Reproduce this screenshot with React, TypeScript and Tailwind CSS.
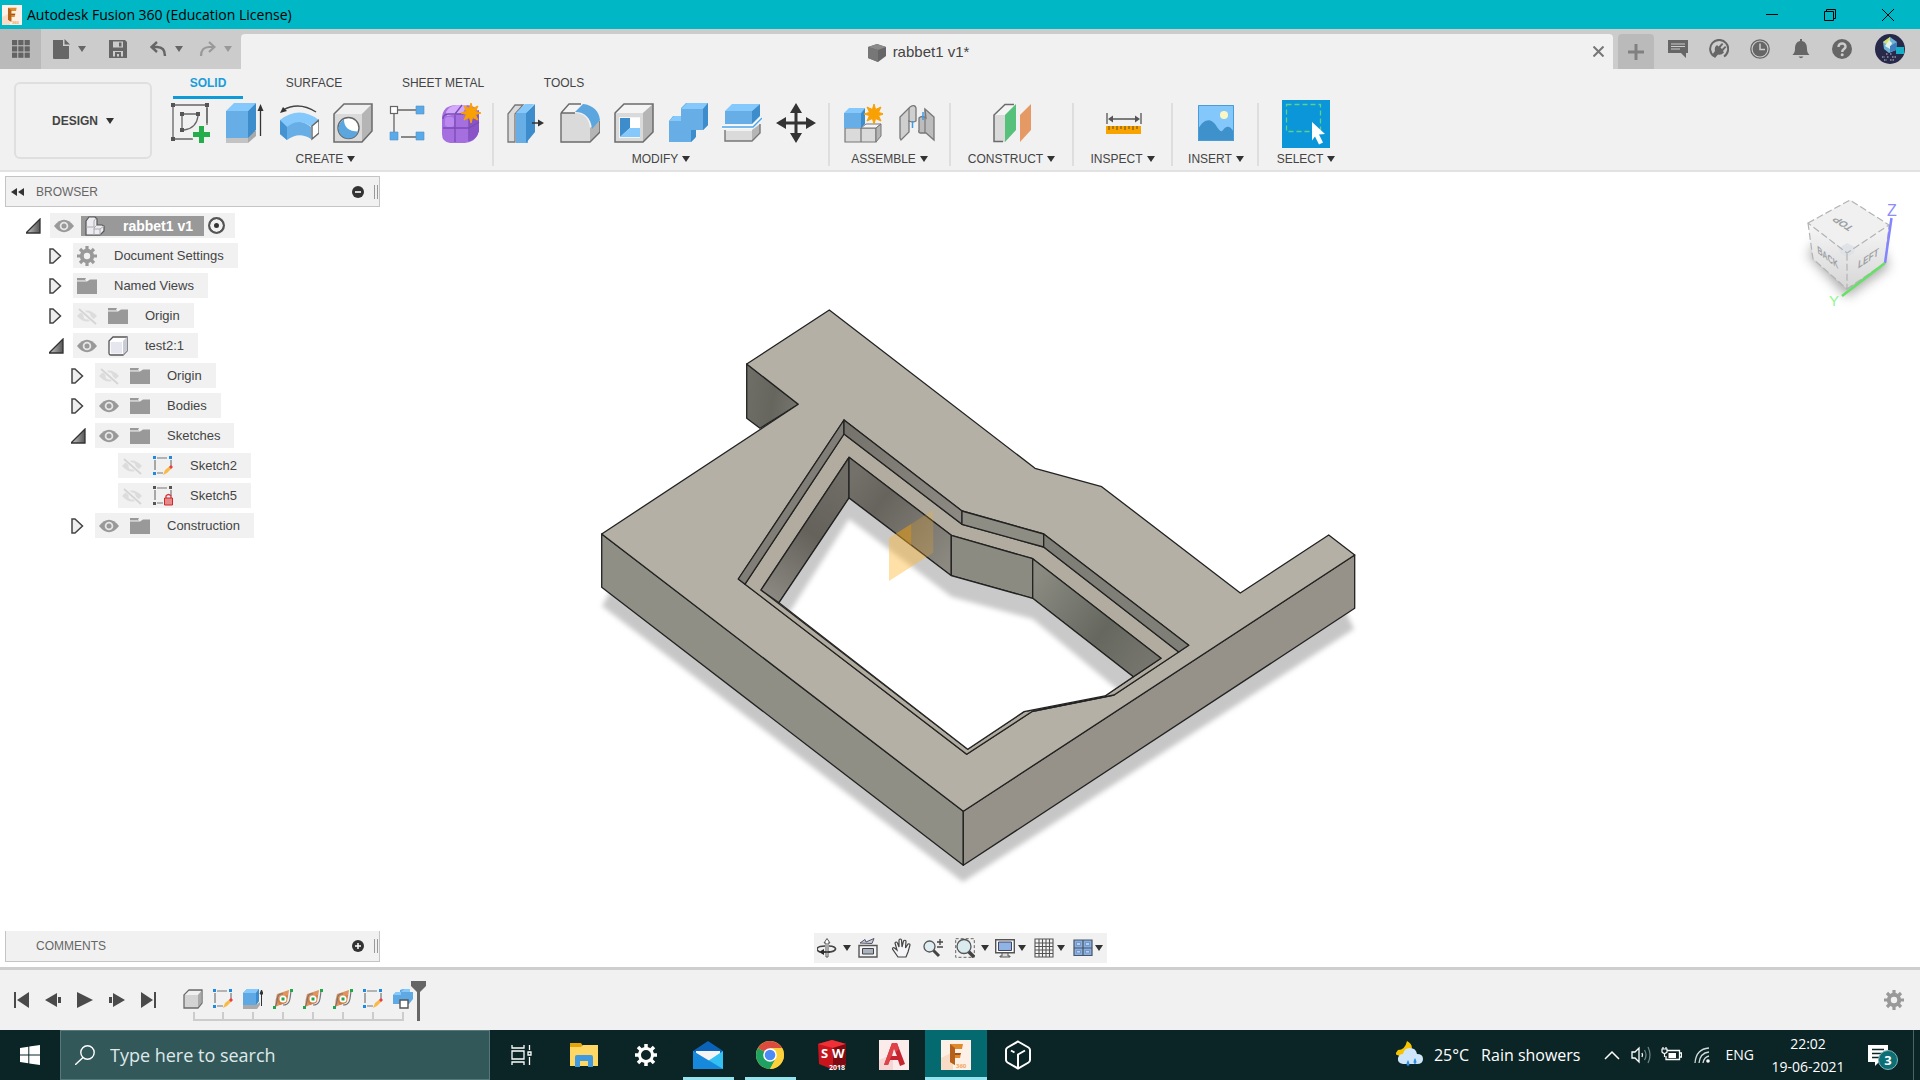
import React, { FunctionComponent, ReactNode } from 'react';
import clsx from 'clsx';

interface IconProps {
  box?: string;
  className?: string;
  children: ReactNode;
}

const Icon: FunctionComponent<IconProps> = ({
  box = '0 0 40 40',
  className = 'w-10 h-10',
  children,
}) => (
  <svg viewBox={box} className={clsx('shrink-0', className)} aria-hidden="true">
    {children}
  </svg>
);

const Caret = ({ className = 'text-[#333]' }: { className?: string }) => (
  <svg
    viewBox="0 0 8 6"
    className={clsx('w-2 h-1.5 shrink-0', className)}
    aria-hidden="true"
  >
    <path d="M0 0h8L4 6z" fill="currentColor" />
  </svg>
);

/* ---------- title bar ---------- */

const FusionLogo = ({ className }: { className: string }) => (
  <Icon box="0 0 30 30" className={className}>
    <rect width="30" height="30" fill="#fdf0e6" />
    <path d="M0 18L12 12v18H0z" fill="#f9dcc5" />
    <path d="M9 4h13l-1 5h-7v4h6l-1 5h-5v7l-5-3z" fill="#e08a2e" />
    <path d="M9 4l5 4v17l-5-3z" fill="#b5601b" />
    <path d="M14 13h6l-1 2h-5z" fill="#9c5218" />
    <text x="15" y="28" fontSize="6" fontWeight="700" fill="#f0a860">
      360
    </text>
  </Icon>
);

const TitleBar = () => (
  <header className="flex items-center h-[29px] bg-[#00b7c6] pl-0.5 font-['Open_Sans',sans-serif]">
    <FusionLogo className="w-5 h-5" />
    <h1 className="ml-[5px] text-sm text-black">
      Autodesk Fusion 360 (Education License)
    </h1>
    <div className="ml-auto flex h-full pr-[3px]">
      <button aria-label="Minimize" className="w-[58px] flex items-center justify-center">
        <Icon box="0 0 12 12" className="w-3 h-3">
          <path d="M0 5.500h12" stroke="#000" />
        </Icon>
      </button>
      <button aria-label="Restore" className="w-[58px] flex items-center justify-center">
        <Icon box="0 0 12 12" className="w-3 h-3">
          <path d="M.5 2.500h9v9h-9zM2.500 2.500v-2h9v9h-2" stroke="#000" fill="none" />
        </Icon>
      </button>
      <button aria-label="Close" className="w-[58px] flex items-center justify-center">
        <Icon box="0 0 12 12" className="w-3 h-3">
          <path d="M0 0l12 12M12 0L0 12" stroke="#000" />
        </Icon>
      </button>
    </div>
  </header>
);

/* ---------- document tabs ---------- */

const small = 'w-5 h-5';

const TabBar = () => (
  <div className="flex items-end h-10 bg-[#ccc] text-[#666]">
    <button aria-label="Data panel" className="w-[41px] h-10 bg-[#bababa] flex items-center justify-center">
      <Icon box="0 0 18 18" className="w-[18px] h-[18px]">
        {[0, 6.3, 12.6].map((x) =>
          [0, 6.3, 12.6].map((y) => (
            <rect key={`${x}-${y}`} x={x} y={y} width="5.2" height="5.2" fill="#636363" />
          ))
        )}
      </Icon>
    </button>
    <div className="flex items-center h-10 w-[200px] pl-[11px]">
      <button aria-label="File" className="flex items-center gap-2">
        <Icon box="0 0 18 20" className="w-[18px] h-5">
          <path d="M1 1h10v6h6v12q0 1-1 1H2q-1 0-1-1z" fill="#666" />
          <path d="M12.500 0v5.500H18z" fill="#666" />
        </Icon>
        <Caret className="text-[#666]" />
      </button>
      <button aria-label="Save" className="ml-[23px]">
        <Icon box="0 0 18 18" className="w-[18px] h-[18px]">
          <path d="M0 0h16l2 2v16H0z" fill="#666" />
          <path d="M4 1.500h10v6H4zM4 11h10v5.500H4z" fill="#ccc" />
          <path d="M10 2.500h2.500v4H10zM6 12h6v5h-2v-3H8v3H6z" fill="#666" />
        </Icon>
      </button>
      <button aria-label="Undo" className="ml-[23px] flex items-center gap-2">
        <Icon box="0 0 17 16" className="w-[17px] h-4">
          <path d="M7 1L1.500 6 7 11M2 6h5c5 0 8 3 8 9" fill="none" stroke="#666" strokeWidth="2.400" />
        </Icon>
        <Caret className="text-[#666]" />
      </button>
      <button aria-label="Redo" className="ml-4 flex items-center gap-2">
        <Icon box="0 0 17 16" className="w-[17px] h-4">
          <path d="M10 1l5.500 5L10 11M15 6h-5c-5 0-8 3-8 9" fill="none" stroke="#999" strokeWidth="2.200" />
        </Icon>
        <Caret className="text-[#999]" />
      </button>
    </div>
    <div className="flex flex-1 items-center h-[35px] bg-[#f1f1f1] rounded-t">
      <div className="flex flex-1 items-center justify-center gap-1.5 pl-0.5 pt-0.5">
        <Icon box="0 0 20 20" className={small}>
          <path d="M1 4l9-3 9 3v9l-8 6-10-4z" fill="#666" />
          <path d="M1 4l10 3 8-3-9-3z" fill="#8b8b8b" />
          <path d="M1 4l10 3v12L1 15z" fill="#777" />
        </Icon>
        <span className="text-[15px] text-[#444]">rabbet1 v1*</span>
      </div>
      <button aria-label="Close tab" className="w-5 flex">
        <Icon box="0 0 11 11" className="w-[11px] h-[11px]">
          <path d="M.5.5l10 10M10.500.5l-10 10" stroke="#777" strokeWidth="2" />
        </Icon>
      </button>
    </div>
    <button aria-label="New design" className="ml-[5px] w-9 h-[35px] rounded-t bg-[#bababa] flex items-center justify-center">
      <Icon box="0 0 16 16" className="w-4 h-4">
        <path d="M8 0v16M0 8h16" stroke="#808080" strokeWidth="3" />
      </Icon>
    </button>
    <div className="flex items-center h-10 gap-[21px] pl-3.5 pr-[15px]">
      <button aria-label="Comments">
        <Icon box="0 0 20 20" className={small}>
          <path d="M0 1h20v13h-2v5l-5-5H0z" fill="#666" />
          <path d="M3 5h14M3 7.500h14M3 10h9" stroke="#ccc" strokeWidth="1.200" />
        </Icon>
      </button>
      <button aria-label="Extensions">
        <Icon box="0 0 20 20" className={small}>
          <path d="M5 17.300A9 9 0 1 1 15 17.500" fill="none" stroke="#666" strokeWidth="2" />
          <path d="M3 16l3-4q-1-4 2-6l1.500 1.500L13 4l1.300 1.300L11.500 8.500l1.500 1.500L16 7l1.300 1.300L14 12l1 1.500q-3 3-6 2L6 19z" fill="#666" />
        </Icon>
      </button>
      <button aria-label="Job status">
        <Icon box="0 0 20 20" className={small}>
          <circle cx="10" cy="10" r="9.200" fill="none" stroke="#666" strokeWidth="1.300" />
          <circle cx="10" cy="10" r="7.400" fill="#666" />
          <path d="M10 4.500v6h5" fill="none" stroke="#ccc" strokeWidth="1.500" />
        </Icon>
      </button>
      <button aria-label="Notifications">
        <Icon box="0 0 20 20" className={small}>
          <path d="M9 0h2v2c4 1 5 4 5 8 0 3 1 4 2.500 6h-17C3 14 4 13 4 10c0-4 1-7 5-8zM7.500 17.500h5Q10 21 7.500 17.500z" fill="#666" />
        </Icon>
      </button>
      <button aria-label="Help">
        <Icon box="0 0 20 20" className={small}>
          <circle cx="10" cy="10" r="10" fill="#666" />
          <path d="M6.500 8c0-5 7.500-4.500 7 0-.3 2.300-3.300 2-3.300 5" fill="none" stroke="#ccc" strokeWidth="2.400" />
          <circle cx="10.200" cy="15.800" r="1.500" fill="#ccc" />
        </Icon>
      </button>
      <button aria-label="Account" className="ml-0.5">
        <Icon box="0 0 30 30" className="w-[30px] h-[30px]">
          <circle cx="15" cy="15" r="15" fill="#28284a" />
          <path d="M8 8l7-5 7 5-1 8-7 3-5-4z" fill="#6db3d6" />
          <path d="M8 8l7-5v9z" fill="#d5e06a" />
          <path d="M14 6l3 3-2 6-5-3z" fill="#e3f0e8" />
          <path d="M15 12l7-4-1 8-6 2z" fill="#3f7fc0" />
          <rect x="21" y="13" width="8" height="7" fill="#15b0c8" />
          <path d="M7 23h3m2 0h2m3 0h4M9 26h3m3 0h5M11 20h2m2 0h2" stroke="#c9cbd8" strokeDasharray="1.500 1" />
        </Icon>
      </button>
    </div>
  </div>
);

/* ---------- ribbon ---------- */

const Star = ({ x, y }: { x: number; y: number }) => (
  <path
    transform={`translate(${x} ${y})`}
    d="M0-10l1.600 5.500L7-7 4.500-1.600 10 0 4.500 1.600 7 7 1.600 4.500 0 10-1.600 4.500-7 7-4.500 1.600-10 0-4.500-1.600-7-7-1.600-4.500z"
    fill="#f8a004"
    stroke="#f8a004"
  />
);

const createIcons: [string, ReactNode][] = [
  [
    'Create Sketch',
    <>
      <path d="M2 2h34v34H2zM11 11h16M11 11v16" fill="none" stroke="#666" strokeWidth="1.300" />
      <path d="M0 0h4v4H0zM34 0h4v4h-4zM0 34h4v4H0zM9 9h4v4H9zM25 9h4v4h-4zM9 25h4v4H9z" fill="#555" />
      <path d="M19 20h21v20H22v-3z" fill="#f1f1f1" />
      <path d="M36 5v17M27 13c-1 8-6 13-14 14" fill="none" stroke="#666" strokeWidth="1.300" />
      <path d="M28 23h5v6h6v5h-6v6h-5v-6h-6v-5h6z" fill="#23ad4b" />
    </>,
  ],
  [
    'Extrude',
    <>
      <path d="M1 35l8-7h22v5l-8 7H1z" fill="#a9a9a9" />
      <path d="M1 35h22v5H1z" fill="#c3c3c3" />
      <path d="M1 8l8-8h22l-8 8z" fill="#85c8fb" />
      <path d="M1 8h22v27H1z" fill="#66aee5" />
      <path d="M23 8l8-8v27l-8 8z" fill="#3d8dcc" />
      <path d="M35.500 33V5" stroke="#333" strokeWidth="1.300" />
      <path d="M32.500 8l3-7 3 7z" fill="#333" />
    </>,
  ],
  [
    'Revolve',
    <>
      <path d="M1 17Q20 2 40 17l-7 7Q20 14 8 25z" fill="#85c8fb" />
      <path d="M1 17v14l7 6V24zM8 24q12-10 24 0v12q-12-8-24 1z" fill="#66aee5" />
      <path d="M1 17v14l7 6V24z" fill="#4593d0" />
      <path d="M33 23l7-6v13l-7 6z" fill="#fff" stroke="#666" strokeWidth="1.400" />
      <path d="M4 7Q20-2 37 9" fill="none" stroke="#444" strokeWidth="1.400" />
      <path d="M1 10l3-6 4 4z" fill="#333" />
    </>,
  ],
  [
    'Hole',
    <>
      <path d="M1 11L11 1h28v27L29 39H1z" fill="#dadada" />
      <path d="M1 11L11 1h28L29 11z" fill="#f0f0f0" />
      <path d="M29 11L39 1v27L29 39z" fill="#b5b5b5" />
      <path d="M1 11L11 1h28v27L29 39H1z" fill="none" stroke="#6b6b6b" strokeWidth="1.500" />
      <circle cx="15.500" cy="25" r="10.500" fill="#fff" stroke="#666" strokeWidth="1.400" />
      <path d="M11 16.500c0 8 5 12 14 12a10 10 0 1 1-14-12z" fill="#5ba6df" />
    </>,
  ],
  [
    'Rectangular Pattern',
    <>
      <path d="M8 7h20M12 34h16M5 11v18" stroke="#666" strokeWidth="1.300" transform="translate(2)" />
      <rect x="3.500" y="3.500" width="7" height="7" fill="#fff" stroke="#666" strokeWidth="1.200" />
      <path d="M29 3h8v8h-8zM29 29h8v8h-8zM3 29h8v8H3z" fill="#5ba9e6" stroke="#4a93cc" strokeWidth=".6" />
    </>,
  ],
  [
    'Create Form',
    <>
      <path d="M1 14Q2 3 14 2h12q12 1 12 12v14q-3 11-14 12H9q-8-1-8-9z" fill="#a66fe0" />
      <path d="M5 9Q8 3 15 2h11l-4 8-16 3z" fill="#d3a9fb" />
      <path d="M28 12l10-5v21q-2 8-9 10z" fill="#8a54c9" />
      <path d="M2 16q0-5 6-5h15q5 0 5 5v22M14 12v27M2 25h26l10-6M14 11l7-9" fill="none" stroke="#7a4bb4" strokeWidth="1.300" />
      <rect x="4" y="14" width="9" height="10" rx="3" fill="#bb88f0" />
      <Star x={30} y={10} />
    </>,
  ],
];

const modifyIcons: [string, ReactNode][] = [
  [
    'Press Pull',
    <>
      <path d="M2 11L9 2h8l-8 9v28H2z" fill="#dadada" stroke="#777" strokeWidth="1.300" />
      <path d="M10 10l9-9h9l-8 9z" fill="#85c8fb" />
      <path d="M10 10h12v30H10z" fill="#66aee5" />
      <path d="M20 10l9-9v28l-9 11z" fill="#3d8dcc" />
      <path d="M26 20h8" stroke="#333" strokeWidth="1.500" />
      <path d="M32 16.500l6 3.500-6 3.500z" fill="#333" />
    </>,
  ],
  [
    'Fillet',
    <>
      <path d="M1 10l8-9h9l-3 9c8 0 14 5 15 15v14H1z" fill="#dadada" />
      <path d="M1 10l8-9h12l-4 9z" fill="#f4f4f4" />
      <path d="M30 25l10-8v12L30 39z" fill="#b5b5b5" />
      <path d="M1 10l8-9h12M1 10v29h29l10-10V18M1 10h14" fill="none" stroke="#6b6b6b" strokeWidth="1.400" />
      <path d="M15 9l8-8c10 1 16 7 17 16l-8 9C31 15 25 9 15 9z" fill="#5ba6df" />
    </>,
  ],
  [
    'Shell',
    <>
      <path d="M1 10L10 1h29v28L29 39H1z" fill="#dadada" />
      <path d="M1 10L10 1h29l-10 9z" fill="#f4f4f4" />
      <path d="M29 10L39 1v28L29 39z" fill="#b5b5b5" />
      <path d="M1 10L10 1h29v28L29 39H1z" fill="none" stroke="#6b6b6b" strokeWidth="1.500" />
      <path d="M5 14h21v21H5z" fill="#f4f4f4" />
      <path d="M6 15h10v10L6 34z" fill="#3d8dcc" />
      <path d="M16 25h10v9H6z" fill="#85c8fb" />
      <path d="M16 15h10v10H16z" fill="#fff" />
    </>,
  ],
  [
    'Combine',
    <>
      <path d="M1 18l4-5h8V5l5-5h22v22l-5 5h-8v8l-4 4H1z" fill="#66aee5" />
      <path d="M13 6l6-6h21l-5 6zM1 18l5-5h7v5z" fill="#85c8fb" />
      <path d="M35 6l5-6v22l-5 5zM23 33v6l5-5v-7h-5z" fill="#3d8dcc" />
    </>,
  ],
  [
    'Split Body',
    <>
      <path d="M3 8l7-7h28l-8 7z" fill="#85c8fb" />
      <path d="M3 8h27v13H3z" fill="#66aee5" />
      <path d="M30 8l8-7v12l-8 8z" fill="#3d8dcc" />
      <path d="M3 28h27v10H3z" fill="#dadada" />
      <path d="M30 27l8-6v9l-8 8z" fill="#b5b5b5" />
      <path d="M3 27v11h27l8-8v-9" fill="none" stroke="#777" strokeWidth="1.400" />
      <path d="M0 24h30l10-9" fill="none" stroke="#fff" strokeWidth="3" />
      <path d="M0 24h31l9-9" fill="none" stroke="#4da5ea" strokeWidth="1.500" />
    </>,
  ],
  [
    'Move',
    <path
      d="M20 0l6 10h-4.500v8.500H30V14l10 6-10 6v-4.500h-8.500V30H26l-6 10-6-10h4.500v-8.500H10V26L0 20l10-6v4.500h8.500V10H14z"
      fill="#333"
    />,
  ],
];

const assembleIcons: [string, ReactNode][] = [
  [
    'New Component',
    <>
      <path d="M2 25h16v14H2zM18 25h15v14H18z" fill="#dadada" stroke="#777" strokeWidth="1.200" />
      <path d="M18 25l5-4h15l-5 4z" fill="#f4f4f4" stroke="#777" strokeWidth="1" />
      <path d="M33 25l5-4v12l-5 6z" fill="#b5b5b5" stroke="#777" strokeWidth="1" />
      <path d="M1 10l5-5h16l-4 5z" fill="#85c8fb" />
      <path d="M1 10h17v15H1z" fill="#66aee5" />
      <path d="M18 10l4-5v16l-4 4z" fill="#3d8dcc" />
      <Star x={31} y={11} />
    </>,
  ],
  [
    'Joint',
    <>
      <path d="M3 14L13 4q5-3 6 1v13q-3 2-7 0v11L4 37l-1-2z" fill="#cfcfcf" stroke="#777" strokeWidth="1.300" />
      <path d="M12 5v14" stroke="#777" strokeWidth="1.200" />
      <path d="M28 6l9 8v23l-8-7h-6q-2-1-1-3V15q3-3 7 0z" fill="#bcbcbc" stroke="#777" strokeWidth="1.300" />
      <path d="M28 6v24" stroke="#777" strokeWidth="1.200" />
      <path d="M15.500 18v7M26 9v8" stroke="#3a9be8" strokeWidth="1.500" />
    </>,
  ],
];

const constructIcons: [string, ReactNode][] = [
  [
    'Offset Plane',
    <>
      <path d="M2 12L13 1h11L13 12v27H2z" fill="#dadada" />
      <path d="M2 12L13 1h11L13 12z" fill="#f4f4f4" />
      <path d="M11 38.500H2V12L13 1.500h9" fill="none" stroke="#6b6b6b" strokeWidth="1.500" />
      <path d="M13 12L24 1v26L13 39z" fill="#55c17a" />
      <path d="M28 12L39 1v26L28 39z" fill="#e59a66" />
    </>,
  ],
];

const inspectIcons: [string, ReactNode][] = [
  [
    'Measure',
    <>
      <path d="M4 10v11M38 10v11M7 16h28" stroke="#555" strokeWidth="1.300" />
      <path d="M5 16l5-3.500v7zM37 16l-5-3.500v7z" fill="#555" />
      <path d="M3 23h35v8H3z" fill="#f7a400" />
      <path d="M6 23v4M10 23v3M14 23v4M18 23v3M22 23v4M26 23v3M30 23v4M34 23v3" stroke="#6b4a10" />
    </>,
  ],
];

const insertIcons: [string, ReactNode][] = [
  [
    'Canvas',
    <>
      <path d="M2 2h36v36H2z" fill="#84c7fb" />
      <path d="M2 26c5-9 12-12 17-5 4 6 6 9 8 6 4-5 7-4 11 2v9H2z" fill="#3f91cb" />
      <circle cx="28" cy="12" r="4" fill="#fbf7c4" />
      <path d="M2.500 2.500h35v35h-35z" fill="none" stroke="#4a9cd6" />
    </>,
  ],
];

interface RibbonGroupProps {
  label: string;
  width: string;
  icons: [string, ReactNode][];
}

const GroupLabel = ({ label }: { label: string }) => (
  <button className="flex items-center gap-1 text-xs whitespace-nowrap text-[#444]">
    {label}
    <Caret />
  </button>
);

const RibbonGroup: FunctionComponent<RibbonGroupProps> = ({ label, width, icons }) => (
  <section className={clsx('flex flex-col items-center gap-2 h-[63px] border-r-2 border-[#dedede]', width)}>
    <div className="flex gap-3.5">
      {icons.map(([name, art]) => (
        <button key={name} aria-label={name}>
          <Icon>{art}</Icon>
        </button>
      ))}
    </div>
    <GroupLabel label={label} />
  </section>
);

const ribbonTabs = [
  { name: 'SURFACE', width: 'w-[142px]' },
  { name: 'SHEET METAL', width: 'w-[116px]' },
  { name: 'TOOLS', width: 'w-[126px]' },
];

const Ribbon = () => (
  <div className="flex h-[103px] bg-[#f1f1f1] border-b-2 border-[#e2e2e2]">
    <button className="ml-3.5 mt-[13px] mb-[11px] w-[138px] h-[77px] rounded-md border-2 border-[#dfdfdf] flex items-center justify-center gap-2 text-xs font-bold text-[#444]">
      DESIGN
      <Caret />
    </button>
    <div className="ml-[13px]">
      <nav className="flex h-[30px] text-xs text-[#444]">
        <button className="ml-2 w-[70px] border-b-[3px] border-[#0f9bd8] font-bold text-[#1a9cdb]">
          SOLID
        </button>
        {ribbonTabs.map((tab) => (
          <button key={tab.name} className={clsx('pb-0.5', tab.width)}>
            {tab.name}
          </button>
        ))}
      </nav>
      <div className="flex pt-1">
        <RibbonGroup label="CREATE" width="w-[329px] pr-1.5" icons={createIcons} />
        <RibbonGroup label="MODIFY" width="w-[336px]" icons={modifyIcons} />
        <RibbonGroup label="ASSEMBLE" width="w-[121px]" icons={assembleIcons} />
        <RibbonGroup label="CONSTRUCT" width="w-[123px]" icons={constructIcons} />
        <RibbonGroup label="INSPECT" width="w-[99px]" icons={inspectIcons} />
        <RibbonGroup label="INSERT" width="w-[86px] pl-0.5" icons={insertIcons} />
        <section className="w-[93px] flex flex-col items-center gap-[3px] -mt-[3px] pl-px">
          <button aria-label="Select">
            <Icon box="0 0 48 48" className="w-12 h-12">
              <path d="M0 0h48v48H0z" fill="#0a96d9" />
              <path d="M4.500 4.500h34v27h-34z" fill="none" stroke="#5fd08d" strokeWidth="1.300" strokeDasharray="5 3" />
              <path d="M30 22l13 12-6 .5 4 8-4 2-4-8-3 4z" fill="#fff" />
            </Icon>
          </button>
          <GroupLabel label="SELECT" />
        </section>
      </div>
    </div>
  </div>
);

/* ---------- browser tree ---------- */

const Eye = () => (
  <Icon box="0 0 20 20" className={small}>
    <path d="M0 10Q10-2.500 20 10 10 22.500 0 10z" fill="#999" />
    <circle cx="10" cy="10" r="4.300" fill="#e6e6e6" />
    <circle cx="10" cy="10" r="2.500" fill="#999" />
  </Icon>
);

const EyeOff = () => (
  <Icon box="0 0 20 20" className={small}>
    <path d="M0 10Q10-1 20 10 10 21 0 10z" fill="#dcdcdc" />
    <circle cx="10" cy="10" r="3.500" fill="#f1f1f1" />
    <path d="M2 2l17 16" stroke="#f1f1f1" strokeWidth="4" />
    <path d="M2 3l17 15" stroke="#d5d5d5" strokeWidth="1.800" />
  </Icon>
);

const Gear = () => (
  <Icon box="0 0 20 20" className={small}>
    <circle cx="10" cy="10" r="5.200" fill="none" stroke="#999" strokeWidth="4" />
    <path d="M10 0v4M10 16v4M0 10h4M16 10h4M3 3l2.800 2.800M14.200 14.200L17 17M17 3l-2.800 2.800M5.800 14.200L3 17" stroke="#999" strokeWidth="3.200" />
  </Icon>
);

const Folder = () => (
  <Icon box="0 0 20 20" className={small}>
    <path d="M0 2h9l-1 2H0zM0 5.500h10l3-2h7V18H0z" fill="#999" />
    <path d="M0 4.600h9" stroke="#ccc" />
  </Icon>
);

const Body = () => (
  <Icon box="0 0 20 20" className={small}>
    <path d="M1 5l4-4h14v14l-4 4H3q-2 0-2-2z" fill="#fff" stroke="#555" strokeWidth="1.300" />
    <path d="M15 5l4-4v14l-4 4z" fill="#c9ccd6" />
    <path d="M2.500 6H14v11.500H3z" fill="#e6e7ee" />
  </Icon>
);

const SketchIcon = ({ locked = false }: { locked?: boolean }) => (
  <Icon box="0 0 20 20" className={small}>
    <path d="M4 2h10M2 4v10M18 4v6M4 17h6" stroke="#777" strokeWidth="1.200" />
    <path d="M0 0h3v3H0zM16 0h3v3h-3zM0 16h3v3H0z" fill={locked ? '#555' : '#1f8be0'} />
    {locked ? (
      <>
        <path d="M13 12v-2q2.500-3 5 0v2" fill="none" stroke="#d33a3f" strokeWidth="1.300" />
        <path d="M11.500 12h8v7h-8z" fill="#e58a8a" stroke="#d0272d" />
      </>
    ) : (
      <>
        <path d="M10 19l2-5 5-4 2 2-5 5z" fill="#f7bb4a" />
        <path d="M16 11l2-2 2 2-2 2z" fill="#ef3b4c" />
      </>
    )}
  </Icon>
);

const Root = () => (
  <Icon box="0 0 20 20" className={small}>
    <path d="M1 5l3-4h6l2 2v6h5l2 1v5l-4 4H1z" fill="#ececf2" stroke="#555" strokeWidth="1.200" />
    <path d="M1 11h8V5l2-3M9 19v-7l3-3M9 13h6l4-3M15 13v6" stroke="#aaa" fill="none" />
  </Icon>
);

interface TreeItem {
  label: string;
  level: number;
  open?: boolean;
  visible?: boolean;
  icon: ReactNode;
}

const treeItems: TreeItem[] = [
  { label: 'Document Settings', level: 1, open: false, icon: <Gear /> },
  { label: 'Named Views', level: 1, open: false, icon: <Folder /> },
  { label: 'Origin', level: 1, open: false, visible: false, icon: <Folder /> },
  { label: 'test2:1', level: 1, open: true, visible: true, icon: <Body /> },
  { label: 'Origin', level: 2, open: false, visible: false, icon: <Folder /> },
  { label: 'Bodies', level: 2, open: false, visible: true, icon: <Folder /> },
  { label: 'Sketches', level: 2, open: true, visible: true, icon: <Folder /> },
  { label: 'Sketch2', level: 3, visible: false, icon: <SketchIcon /> },
  { label: 'Sketch5', level: 3, visible: false, icon: <SketchIcon locked /> },
  { label: 'Construction', level: 2, open: false, visible: true, icon: <Folder /> },
];

const indents = ['pl-[26px]', 'pl-[49px]', 'pl-[71px]', 'pl-[94px]'];

const Twisty = ({ open }: { open?: boolean }) => (
  <button aria-label={open ? 'Collapse' : 'Expand'} className="w-6">
    <Icon box="0 0 15 16" className="w-[15px] h-4">
      {open ? (
        <path d="M14 1v14H0z" fill="url(#twisty)" stroke="#333" strokeWidth="1.300" />
      ) : (
        <path d="M1 1h3l7.500 7L4 15H1z" fill="#eee" stroke="#444" strokeWidth="1.500" />
      )}
    </Icon>
  </button>
);

const TreeRow = ({ item }: { item: TreeItem }) => (
  <li className={clsx('flex items-center h-[25px]', indents[item.level])}>
    {item.open === undefined ? <span className="w-6" /> : <Twisty open={item.open} />}
    <div className="flex items-center h-full bg-[#f1f1f1] pl-1 pr-3.5">
      {item.visible !== undefined && (
        <button aria-label="Toggle visibility" className="mr-[11px]">
          {item.visible ? <Eye /> : <EyeOff />}
        </button>
      )}
      {item.icon}
      <span className="ml-[17px] text-[13px] text-[#444]">{item.label}</span>
    </div>
  </li>
);

const Grip = () => (
  <span className="ml-2.5 w-1 h-3.5 border-l border-r border-[#999] shrink-0" />
);

const BrowserPanel = () => (
  <aside className="w-[375px]">
    <div className="flex items-center h-[31px] bg-[#f1f1f1] border border-[#c4c4c4] pl-[5px] pr-px">
      <button aria-label="Collapse browser">
        <Icon box="0 0 13 8" className="w-[13px] h-2">
          <path d="M6 0v8L0 4zM13 0v8L7 4z" fill="#333" />
        </Icon>
      </button>
      <h2 className="ml-3 text-xs text-[#666]">BROWSER</h2>
      <button aria-label="Minimize browser" className="ml-auto">
        <Icon box="0 0 12 12" className="w-3 h-3">
          <circle cx="6" cy="6" r="6" fill="#333" />
          <path d="M3 6h6" stroke="#fff" strokeWidth="1.600" />
        </Icon>
      </button>
      <Grip />
    </div>
    <ul className="-ml-[5px] mt-1.5 flex flex-col gap-[5px]">
      <li className="flex items-center h-[25px] pl-[26px]">
        <Twisty open />
        <div className="flex items-center h-full bg-[#f1f1f1] pl-1 pr-2.5">
          <button aria-label="Toggle visibility">
            <Eye />
          </button>
          <span className="ml-[7px] flex items-center h-5 bg-[#999] pl-1 pr-[11px]">
            <Root />
            <span className="ml-[18px] text-sm font-bold text-white">rabbet1 v1</span>
          </span>
          <input
            type="radio"
            name="active"
            aria-label="Activate component"
            defaultChecked
            className="ml-1 w-[17px] h-[17px] appearance-none rounded-full border-2 border-[#555] bg-[#333] shadow-[inset_0_0_0_4px_#f1f1f1]"
          />
        </div>
      </li>
      {treeItems.map((item, i) => (
        <TreeRow key={i} item={item} />
      ))}
    </ul>
  </aside>
);

/* ---------- view cube ---------- */

const ViewCube = () => (
  <svg viewBox="1790 190 120 130" className="w-[120px] h-[130px]" role="img" aria-label="View cube">
    <defs>
      <filter id="cubeBlur" x="-30%" y="-30%" width="160%" height="160%">
        <feGaussianBlur stdDeviation="6" />
      </filter>
      <linearGradient id="cubeSide" x1="0" y1="0" x2="0" y2="1">
        <stop offset="0" stopColor="#f6f6f6" />
        <stop offset="1" stopColor="#d6d6d6" />
      </linearGradient>
    </defs>
    <path d="M1808 255l39 42 42-30-8-20-60-10z" fill="#888" opacity=".7" filter="url(#cubeBlur)" />
    <path d="M1808 223l39 30v36l-34-30z" fill="url(#cubeSide)" />
    <path d="M1889 225l-42 28v36l38-26z" fill="url(#cubeSide)" />
    <path d="M1808 223l42-23 39 25-42 28z" fill="#f0f0f0" />
    <path d="M1839 248l8-5 8 4-1 6-7 5-7-5z" fill="#dfe3e8" />
    <path
      d="M1808 223l42-23 39 25-42 28zM1808 223l5 36 34 30v-36M1847 289l38-26 4-38"
      fill="none"
      stroke="#b3b3b3"
      strokeWidth="1.200"
      strokeDasharray="7 3"
    />
    <path d="M1885 263l6.500-45" stroke="#8484ff" strokeWidth="2.500" />
    <path d="M1885 263l-43 33" stroke="#66e066" strokeWidth="2.500" />
    <g fontFamily="Liberation Sans, sans-serif" textAnchor="middle">
      <text x="1892" y="216" fontSize="16" fill="#8c8cff">Z</text>
      <text x="1834" y="306" fontSize="15" fill="#90f590">Y</text>
      <g fontSize="11" fontWeight="700" fill="#9c9fa3">
        <text transform="matrix(-.75 -.5 .8 -.5 1846 222)">TOP</text>
        <text transform="matrix(.65 .5 .1 1 1828 261)">BACK</text>
        <text transform="matrix(.75 -.5 -.1 1 1868 262)">LEFT</text>
      </g>
    </g>
  </svg>
);

/* ---------- 3d model ---------- */

const Model = () => (
  <svg
    viewBox="0 172 1920 795"
    className="absolute inset-0 w-full h-full"
    role="img"
    aria-label="rabbet1 model"
  >
    <defs>
      <linearGradient id="twisty" x1="0" y1="0" x2="1" y2="0">
        <stop offset="0" stopColor="#ccc" />
        <stop offset="1" stopColor="#555" />
      </linearGradient>
      <filter id="soft" x="-10%" y="-10%" width="120%" height="120%">
        <feGaussianBlur stdDeviation="2.500" />
      </filter>
      <clipPath id="hole">
        <path d="M849 498l102.300 77.700 81.400 22.600 100.600 78.400L1105 696l-81 15.700-56.300 37.600L779 602.700z" />
      </clipPath>
      <linearGradient id="tabWall" x1="0" y1="0" x2="1" y2=".2">
        <stop offset="0" stopColor="#6f6f67" />
        <stop offset=".6" stopColor="#66665e" />
        <stop offset="1" stopColor="#74736b" />
      </linearGradient>
      <linearGradient id="wallA" gradientUnits="userSpaceOnUse" x1="850" y1="480" x2="765" y2="600">
        <stop offset="0" stopColor="#6f6d65" />
        <stop offset=".45" stopColor="#64625a" />
        <stop offset="1" stopColor="#8d8b83" />
      </linearGradient>
      <linearGradient id="wallB" gradientUnits="userSpaceOnUse" x1="849" y1="480" x2="951" y2="560">
        <stop offset="0" stopColor="#73716a" />
        <stop offset=".3" stopColor="#66645d" />
        <stop offset="1" stopColor="#8c8981" />
      </linearGradient>
      <linearGradient id="wallD" gradientUnits="userSpaceOnUse" x1="1033" y1="580" x2="1150" y2="665">
        <stop offset="0" stopColor="#8b8b82" />
        <stop offset=".6" stopColor="#66685f" />
        <stop offset="1" stopColor="#77766e" />
      </linearGradient>
      <linearGradient id="ledge" gradientUnits="userSpaceOnUse" x1="844" y1="425" x2="962" y2="520">
        <stop offset="0" stopColor="#74726b" />
        <stop offset="1" stopColor="#8c8a82" />
      </linearGradient>
    </defs>

    <path d="M602 606L963 882l391-253-12-25-379 250-352-264z" fill="#bdbdbd" opacity=".85" filter="url(#soft)" />

    <g stroke="#222" strokeWidth="1.300" strokeLinejoin="round">
      <path d="M746.700 364v54.300l13.300 10 38.300-24z" fill="url(#tabWall)" />
      <path d="M601.700 534v53.300l361.600 278v-54z" fill="#8f8f86" />
      <path d="M963.300 811.300v54l391.400-257V555z" fill="#96928a" />
      <path
        fillRule="evenodd"
        d="M829.300 310L1035 468.300l66.700 18.400L1240.300 593l88.400-58 26 20-391.400 256.300L601.700 534l196.600-129.700-51.600-40.300z
           M844 420l118 91 81.700 23 145 111.300L1114 695l-82.300 16.700-65 42.600L738.300 579z"
        fill="#b5b0a5"
      />
      <path
        fillRule="evenodd"
        d="M844 434l118 90.300 81.700 22.700 135 105-64.700 43-82.300 16.700-65 42.600L745 584.200z
           M849 457.300l102.300 78 81.400 23.400L1161 658.300 1105 696l-81 15.700-56.300 37.600L761 590z"
        fill="#b1ac9f"
      />
      <path d="M844 420L738.300 579l6.700 5.200L844 434z" fill="#807e77" />
      <path d="M844 420l118 91v13.300L844 434z" fill="url(#ledge)" />
      <path d="M962 511l81.700 23v13L962 524.300z" fill="#8e8d84" />
      <path d="M1043.700 534l145 111.300-10 6.700-135-105z" fill="#807f77" />
      <path d="M849 457.300L761 590l18 12.700L849 498z" fill="url(#wallA)" />
      <path d="M849 457.300l102.300 78v40.400L849 498z" fill="url(#wallB)" />
      <path d="M951.300 535.300l81.400 23.400v39.600l-81.400-22.600z" fill="#8c8b82" />
      <path d="M1032.700 558.700L1161 658.300l-27.700 18.400-100.600-78.400z" fill="url(#wallD)" />
    </g>

    <g clipPath="url(#hole)">
      <path d="M740 480h420v280H740z" fill="#c9c9c9" />
      <path
        d="M849 519l102.300 77.700 81.400 22.300L1130 700v80H740v-90z"
        fill="#fff"
        filter="url(#soft)"
      />
    </g>
    <path
      d="M849 498l102.300 77.700 81.400 22.600 100.600 78.400L1105 696l-81 15.700-56.300 37.600L779 602.700z"
      fill="none"
      stroke="#222"
      strokeWidth="1.300"
    />

    <path d="M889 538l7-4.400 30.600 23.400L889 581z" fill="#ffb52e" opacity=".42" />
    <path d="M896 533.600l15.300-9.600v21.400z" fill="#e09a1a" opacity=".6" />
    <path d="M911.300 524l22-14.300v43l-6.700 4.300-15.300-11.600z" fill="#ffae1f" opacity=".22" />
  </svg>
);

/* ---------- canvas footer ---------- */

const navButtons: { name: string; art: ReactNode; menu?: boolean; gap: string }[] = [
  {
    name: 'Orbit',
    menu: true,
    gap: 'gap-1.5 mr-[7px]',
    art: (
      <>
        <path d="M12 8c9 0 9 6-2 6H5M8 8C-1 8-2 12 3 14" fill="none" stroke="#444" strokeWidth="1.700" />
        <path d="M9 19V5H7l3-4.500L13 5h-2v14z" fill="#fff" stroke="#555" />
        <path d="M2 14l5-3v6z" fill="#222" />
        <path d="M5 14h8" stroke="#333" strokeWidth="1.500" />
      </>
    ),
  },
  {
    name: 'Look At',
    gap: 'mr-[13px]',
    art: (
      <>
        <path d="M1 7.500h18V19H1z" fill="#f4f4f6" stroke="#555" strokeWidth="1.400" />
        <path d="M4.500 10.500h11v5.500h-11z" fill="#aab2c0" stroke="#444" />
        <path d="M2 5l5-3.500 1 2.500 8-3.500-2 5z" fill="#c9cede" stroke="#556" />
      </>
    ),
  },
  {
    name: 'Pan',
    gap: 'mr-3',
    art: (
      <path
        d="M7 19L1.500 11q0-2 2-1L6 12 4 5q1-2 2.500 0L8 9V2q1.500-2 2.500 0l.5 7 1.500-6q1.500-1.500 2.500 0l-.500 7L17 6q2-.5 2 1l-2 7-2 5z"
        fill="#f5f5f8"
        stroke="#444"
        strokeWidth="1.200"
      />
    ),
  },
  {
    name: 'Zoom',
    gap: 'mr-3',
    art: (
      <>
        <path d="M10 12l6 6" stroke="#444" strokeWidth="3" />
        <circle cx="6.500" cy="8.500" r="5.500" fill="#dcecf0" stroke="#555" strokeWidth="1.300" />
        <path d="M17 1v6M14 4h6M14 9h6" stroke="#444" strokeWidth="1.300" />
      </>
    ),
  },
  {
    name: 'Fit',
    menu: true,
    gap: 'gap-1.5 mr-1.5',
    art: (
      <>
        <path d="M.7.700h18.600v18.600H.7z" fill="none" stroke="#666" strokeDasharray="3 2" />
        <path d="M13 13l6 6" stroke="#444" strokeWidth="3.500" />
        <circle cx="9" cy="8.500" r="7" fill="#d9ebee" stroke="#555" strokeWidth="1.300" />
      </>
    ),
  },
  {
    name: 'Display Settings',
    menu: true,
    gap: 'gap-[3px] mr-2',
    art: (
      <>
        <path d="M.7 1.700h18.600v13H.7z" fill="#fff" stroke="#555" strokeWidth="1.400" />
        <path d="M3.500 4h13v8.500h-13z" fill="#8fb3e3" stroke="#446" />
        <path d="M7 15h6v3h2v1H5v-1h2z" fill="#ddd" stroke="#555" />
      </>
    ),
  },
  {
    name: 'Grid and Snaps',
    menu: true,
    gap: 'gap-[3px] mr-2',
    art: (
      <path
        d="M1 1h18v18H1zM5 1v18M8.500 1v18M12 1v18M15.500 1v18M1 5h18M1 8.500h18M1 12h18M1 15.500h18"
        fill="#f7f7f7"
        stroke="#555"
        strokeWidth="1.100"
      />
    ),
  },
  {
    name: 'Viewports',
    menu: true,
    gap: 'gap-0.5',
    art: (
      <>
        <path d="M1 2h9v8H1zM10 2h9v8h-9zM1 10h9v7.500H1zM10 10h9v7.500h-9z" fill="#8aaee0" stroke="#456" strokeWidth="1.200" />
        <path d="M3.500 4.500h4v3h-4zM12.500 4.500h4v3h-4zM3.500 12.500h4v2.500h-4zM12.500 12.500h4v2.500h-4z" fill="#b8d0f0" stroke="#5f86bd" strokeWidth=".7" />
      </>
    ),
  },
];

const CanvasFooter = () => (
  <div className="relative mt-auto mb-1 grid grid-cols-[1fr_auto_1fr] items-start">
    <div className="flex items-center w-[375px] h-[31px] ml-[5px] -mt-0.5 bg-[#f1f1f1] border border-t-0 border-[#c4c4c4] pl-[30px] pr-px">
      <h2 className="text-xs text-[#666]">COMMENTS</h2>
      <button aria-label="Add comment" className="ml-auto">
        <Icon box="0 0 12 12" className="w-3 h-3">
          <circle cx="6" cy="6" r="6" fill="#333" />
          <path d="M3 6h6M6 3v6" stroke="#fff" strokeWidth="1.500" />
        </Icon>
      </button>
      <Grip />
    </div>
    <div className="flex items-center h-[30px] pl-[3px] pr-1 bg-[#f1f1f1]">
      {navButtons.map((b) => (
        <button key={b.name} aria-label={b.name} className={clsx('flex items-center', b.gap)}>
          <Icon box="0 0 20 20" className={small}>
            {b.art}
          </Icon>
          {b.menu && <Caret />}
        </button>
      ))}
    </div>
  </div>
);

/* ---------- timeline ---------- */

const playback = [
  ['Go to start', 'M1 0h2v16H1zM16 0v16L4 8z'],
  ['Step back', 'M0 8l12-7v14zM13 5h3v6h-3z'],
  ['Play', 'M0 0l16 8-16 8z'],
  ['Step forward', 'M16 8L4 1v14zM0 5h3v6H0z'],
  ['Go to end', 'M13 0h2v16h-2zM0 0v16l12-8z'],
];

const PatchArt = () => (
  <>
    <path d="M4 5l12-4q-1 7-2 12L2 18q0-7 2-13z" fill="#e0935c" />
    <path d="M3 10l12-4-2 8-6 2z" fill="#cf7f49" />
    <path d="M2 18c4-6 0-14 8-13M18 2c-1 6 0 14-8 14" fill="none" stroke="#777" strokeWidth="1.200" />
    <circle cx="10" cy="10" r="3.500" fill="#fff" />
    <path d="M8.500 8.500h3v3h-3zM17 0h3v3h-3zM0 17h3v3H0z" fill="#20a84a" />
  </>
);

const features: [string, ReactNode][] = [
  [
    'Component',
    <>
      <path d="M1 6l5-5h13v13l-4 5H1z" fill="#d3d3d3" stroke="#6b6b6b" strokeWidth="1.300" />
      <path d="M2 6l4-4h12l-3 4z" fill="#efefef" />
      <path d="M15 6l3.500-4v12L15 18z" fill="#a9a9a9" />
    </>,
  ],
  ['Sketch2', null],
  [
    'Extrude1',
    <>
      <path d="M0 16h13l4-3v3l-3 4H0z" fill="#aaa" />
      <path d="M0 4l4-4h12v12l-3 4H0z" fill="#5ea9e3" />
      <path d="M0 4l4-4h12l-3 4z" fill="#85c8fb" />
      <path d="M13 4l3-4v12l-3 4z" fill="#3d8dcc" />
      <path d="M18.500 17V3M17 5l1.500-4L20 5z" stroke="#333" fill="#333" />
    </>,
  ],
  ['Patch1', <PatchArt />],
  ['Patch2', <PatchArt />],
  ['Patch3', <PatchArt />],
  ['Sketch5', null],
  [
    'Extrude2',
    <>
      <path d="M0 6l3-3h4V1l3-1h7v3h3v7l-4 5H0z" fill="#5ea9e3" />
      <path d="M0 6l3-3h5v3zM8 3l3-3h6v3z" fill="#85c8fb" />
      <path d="M7 11h8v8H7z" fill="#fff" stroke="#555" strokeWidth="1.400" />
    </>,
  ],
];

const Timeline = () => (
  <footer className="flex items-center h-[63px] bg-[#f1f1f1] border-t-[3px] border-[#cecece] pl-[13px] pr-4">
    <div className="flex gap-4">
      {playback.map(([name, d]) => (
        <button key={name} aria-label={name}>
          <Icon box="0 0 16 16" className="w-4 h-[18px]">
            <path d={d} fill="#4a4a4a" />
          </Icon>
        </button>
      ))}
    </div>
    <div className="ml-[26px] flex items-end pt-0.5">
      <div>
        <div className="flex gap-2.5">
          {features.map(([name, art]) => (
            <button key={name} aria-label={name}>
              {art ? (
                <Icon box="0 0 20 20" className={small}>
                  {art}
                </Icon>
              ) : (
                <SketchIcon />
              )}
            </button>
          ))}
        </div>
        <Icon box="0 0 230 9" className="mt-[3px] w-[230px] h-[9px]">
          <path
            d="M11 0v7M40 0v7M70 0v7M100 0v7M130 0v7M160 0v7M190 0v7M220 0v7M10 8h211"
            stroke="#ccc"
            strokeWidth="2"
          />
        </Icon>
      </div>
      <Icon box="0 0 15 40" className="-ml-0.5 w-[15px] h-10">
        <path d="M0 0h15v5L9 11v29H6V11L0 5z" fill="#666" />
      </Icon>
    </div>
    <button aria-label="Timeline settings" className="ml-auto">
      <Gear />
    </button>
  </footer>
);

/* ---------- windows taskbar ---------- */

const apps: { name: string; art: ReactNode; running?: boolean; active?: boolean }[] = [
  {
    name: 'Task View',
    art: (
      <path
        d="M5 5v3h12V5M5 25v-3h12v3M5 11h12v8H5zM22.500 5v5M22.500 17v8M21 12h3v3h-3z"
        fill="none"
        stroke="#fff"
        strokeWidth="1.300"
      />
    ),
  },
  {
    name: 'File Explorer',
    art: (
      <>
        <path d="M1 3h11l2 3h15v20H1z" fill="#e5a50a" />
        <path d="M1 7h11l2-2h15v21H1z" fill="#ffd764" />
        <path d="M6 27V17q0-2 2-2h14q2 0 2 2v10h-5v-6h-8v6z" fill="#3f9ae0" />
      </>
    ),
  },
  {
    name: 'Settings',
    art: (
      <>
        <circle cx="15" cy="15" r="6.500" fill="none" stroke="#fff" strokeWidth="3" />
        <path
          d="M15 4v4M15 22v4M4 15h4M22 15h4M7 7l3 3M20 20l3 3M23 7l-3 3M10 20l-3 3"
          stroke="#fff"
          strokeWidth="3.500"
        />
      </>
    ),
  },
  {
    name: 'Mail',
    running: true,
    art: (
      <>
        <path d="M0 11L15 1l15 10v3H0z" fill="#0a63b8" />
        <path d="M3 11h24v10H3z" fill="#f4f4f4" />
        <path d="M0 11l15 10L30 11v18H0z" fill="#33c0f3" />
        <path d="M0 11l30 18H0z" fill="#1789dd" />
      </>
    ),
  },
  {
    name: 'Chrome',
    running: true,
    art: (
      <>
        <circle cx="15" cy="15" r="14" fill="#fdd13a" />
        <path d="M15 15L2.900 8a14 14 0 0 1 24.200 0H15z" fill="#dd4b3e" />
        <path d="M15 29A14 14 0 0 1 2.900 8L15 15l5 5z" fill="#1da261" />
        <path d="M15 8h12.100A14 14 0 0 1 15 29l6-11z" fill="#fdd13a" />
        <circle cx="15" cy="15" r="6.800" fill="#fff" />
        <circle cx="15" cy="15" r="5.300" fill="#4c8bf5" />
      </>
    ),
  },
  {
    name: 'SolidWorks 2018',
    art: (
      <>
        <path d="M1 4L15 0l14 4v21l-12 5L2 24z" fill="#c8151c" />
        <path d="M1 4L15 0l14 4-13 4z" fill="#f03036" />
        <path d="M16 8l13-4v20l-13 6z" fill="#7d0a10" />
        <text x="4" y="18" fontSize="13" fontWeight="700" fill="#fff">S</text>
        <text x="15" y="18" fontSize="13" fontWeight="700" fill="#fff">W</text>
        <text x="12" y="29.500" fontSize="7" fontWeight="700" fill="#fff">2018</text>
      </>
    ),
  },
  {
    name: 'AutoCAD',
    art: (
      <>
        <path d="M0 0h30v30H0z" fill="#fbeceb" />
        <path d="M0 20l14-6v16H0z" fill="#f6d6d4" />
        <path d="M13 3h5l8 21-5 2-2-6h-8l-2 5H5z" fill="#c5232d" />
        <path d="M13 3h5l2 6-8 8-3 8H5z" fill="#e0424a" />
        <path d="M15 9l3 7h-5z" fill="#fbeceb" />
      </>
    ),
  },
  { name: 'Fusion 360', running: true, active: true, art: null },
  {
    name: '3D Viewer',
    art: (
      <path
        d="M15 1.500l10.500 6Q27 8.500 27 10v10q0 1.500-1.500 2.500L15 28.500l-10.500-6Q3 21.500 3 20V10q0-1.500 1.500-2.500zM8 10.500l3.500 2M15 28V14.500l7-4"
        fill="none"
        stroke="#fff"
        strokeWidth="2"
      />
    ),
  },
];

const Taskbar = () => (
  <div className="flex items-center h-[50px] bg-[#0b2426] text-white font-['Open_Sans',sans-serif]">
    <button aria-label="Start" className="w-[60px] flex justify-center">
      <Icon box="0 0 20 20" className={small}>
        <path d="M0 3l8.300-1.200v7.700H0zM9.300 1.600L20 0v9.500H9.300zM0 10.500h8.300v7.700L0 17zM9.300 10.500H20V20L9.300 18.400z" fill="#fff" />
      </Icon>
    </button>
    <label className="flex items-center w-[430px] h-full bg-[#33585a] border border-[#56787a] pl-3.5">
      <Icon box="0 0 20 20" className={small}>
        <circle cx="12.500" cy="7.500" r="6.700" fill="none" stroke="#fff" strokeWidth="1.400" />
        <path d="M8 12.500L0 20" stroke="#fff" strokeWidth="1.400" />
      </Icon>
      <input
        type="text"
        aria-label="Search"
        placeholder="Type here to search"
        className="ml-[15px] flex-1 bg-transparent text-lg placeholder:text-[#dfe9e9] outline-none"
      />
    </label>
    <div className="flex h-full pl-px">
      {apps.map((app) => (
        <button
          key={app.name}
          aria-label={app.name}
          className={clsx(
            'w-[62px] h-full flex flex-col items-center justify-between pt-2.5',
            app.active && 'bg-[#056a70]'
          )}
        >
          {app.art ? (
            <Icon box="0 0 30 30" className="w-[30px] h-[30px]">
              {app.art}
            </Icon>
          ) : (
            <FusionLogo className="w-[30px] h-[30px]" />
          )}
          {app.running && (
            <span className={clsx('h-[3px] bg-[#94e3ee]', app.active ? 'w-full' : 'w-[51px]')} />
          )}
        </button>
      ))}
    </div>
    <div className="ml-auto flex items-center h-full">
      <button className="flex items-center text-base">
        <Icon box="0 0 28 28" className="w-7 h-7">
          <path d="M11 0q7 4 4 10L6 16-1 13l3-4q7 0 9-9z" fill="#f7c300" />
          <path d="M7 23q-6-1-5-6 1-4 5-4 1-6 7-6t7 6q6 0 6 5 0 5-6 5z" fill="#cfe6fa" />
          <path d="M12 19q-3 5 0 6 3-1 0-6zM19 17q-3 5 0 6 3-1 0-6z" fill="#2f8de4" />
        </Icon>
        <span className="ml-2.5">25°C</span>
        <span className="ml-3">Rain showers</span>
      </button>
      <button aria-label="Show hidden icons" className="ml-[23px]">
        <Icon box="0 0 16 10" className="w-4 h-2.5">
          <path d="M1 9l7-7 7 7" fill="none" stroke="#fff" strokeWidth="1.500" />
        </Icon>
      </button>
      <button aria-label="Volume" className="ml-[11px]">
        <Icon box="0 0 21 20" className="w-[21px] h-5">
          <path d="M1 7h3l4-4v14l-4-4H1z" fill="none" stroke="#fff" strokeWidth="1.300" />
          <path d="M11 8q1 2 0 4" fill="none" stroke="#fff" strokeWidth="1.300" />
          <path d="M13.500 5q3 5 0 10M17 2q4 8 0 16" fill="none" stroke="#6d8384" strokeWidth="1.300" />
        </Icon>
      </button>
      <button aria-label="Battery" className="ml-[9px]">
        <Icon box="0 0 21 20" className="w-[21px] h-5">
          <path d="M6 5.500h12.500v9H5V11M19 8h1.500v4H19" fill="none" stroke="#fff" strokeWidth="1.300" />
          <path d="M7.500 8h7.500v5H7.500z" fill="#fff" />
          <path d="M1 4h5v3q-2.500 3-5 0zM2 2v2M5 2v2M3.500 9v3" fill="none" stroke="#fff" strokeWidth="1.200" />
        </Icon>
      </button>
      <button aria-label="Network" className="ml-3">
        <Icon box="0 0 16 20" className="w-4 h-5">
          <path d="M1 18Q2 4 15 3M5 18Q6 8 15 7M9 18Q10 12 15 11" fill="none" stroke="#cfdada" strokeWidth="1.300" />
          <circle cx="14" cy="16" r="1.800" fill="#fff" />
        </Icon>
      </button>
      <button className="ml-4 text-sm">ENG</button>
      <button className="ml-3.5 w-20 text-center text-sm leading-[23px]">
        22:02
        <br />
        19-06-2021
      </button>
      <button aria-label="Notifications" className="ml-5">
        <Icon box="0 0 31 30" className="w-[31px] h-[30px]">
          <path d="M0 5h20v17h-9l-4 4v-4H0z" fill="#fff" />
          <path d="M4 9.500h12M4 13.500h12M4 17.500h7" stroke="#0b2426" strokeWidth="1.300" />
          <circle cx="20" cy="20" r="9.500" fill="#0d6f75" stroke="#7fb5b8" />
          <text x="20" y="25" fontSize="13" fontWeight="700" textAnchor="middle" fill="#fff">3</text>
        </Icon>
      </button>
      <span className="ml-3.5 mr-1.5 w-px h-full bg-[#4b6264]" />
    </div>
  </div>
);

const App: FunctionComponent = () => (
  <div className="flex flex-col h-screen bg-white overflow-hidden font-['Liberation_Sans',Arial,sans-serif]">
    <TitleBar />
    <TabBar />
    <Ribbon />
    <main className="relative flex-1 flex flex-col">
      <Model />
      <div className="relative flex justify-between items-start pl-[5px] pt-1 pr-2.5">
        <BrowserPanel />
        <div className="pt-3.5">
          <ViewCube />
        </div>
      </div>
      <CanvasFooter />
    </main>
    <Timeline />
    <Taskbar />
  </div>
);

export default App;
